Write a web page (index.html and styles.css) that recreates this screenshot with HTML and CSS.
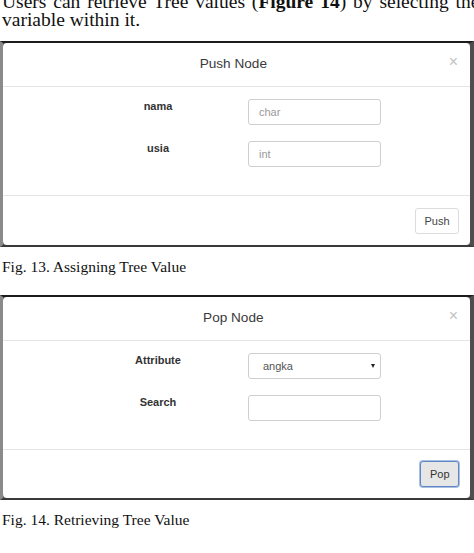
FILE: index.html
```html
<!DOCTYPE html>
<html>
<head>
<meta charset="utf-8">
<link rel="stylesheet" href="styles.css">
</head>
<body>
<p class="lead"><span class="line">Users can retrieve Tree values (<b>Figure 14</b>) by selecting the</span><br><span class="line">variable within it.</span></p>

<div class="shot">
  <div class="modal">
    <div class="modal-header">
      <div class="modal-title">Push Node</div>
      <div class="close">×</div>
    </div>
    <div class="modal-body">
      <div class="label">nama</div>
      <div class="field"><span class="ph">char</span></div>
      <div class="label">usia</div>
      <div class="field"><span class="ph">int</span></div>
    </div>
    <div class="modal-footer">
      <div class="btn">Push</div>
    </div>
  </div>
</div>
<p class="caption">Fig. 13. Assigning Tree Value</p>

<div class="shot shot2">
  <div class="modal">
    <div class="modal-header">
      <div class="modal-title">Pop Node</div>
      <div class="close">×</div>
    </div>
    <div class="modal-body">
      <div class="label">Attribute</div>
      <div class="field select"><span class="val">angka</span><span class="caret"></span></div>
      <div class="label">Search</div>
      <div class="field"></div>
    </div>
    <div class="modal-footer">
      <div class="btn btn-focus">Pop</div>
    </div>
  </div>
</div>
<p class="caption cap2">Fig. 14. Retrieving Tree Value</p>
</body>
</html>
```

FILE: styles.css
```css
html, body {
  margin: 0;
  padding: 0;
  overflow: hidden;
  background: #fff;
}
body {
  width: 474px;
  height: 553px;
  font-family: "Liberation Serif", "Times New Roman", serif;
  color: #111;
}
.lead {
  margin: -7px 0 0 0;
  padding-left: 2px;
  font-size: 19.5px;
  line-height: 18px;
  white-space: nowrap;
}
.lead .line:first-child {
  word-spacing: 2px;
}
.shot {
  margin-top: 12px;
  background: #555;
  border-top: 2px solid #1c1c1c;
  border-bottom: 2px solid #3a3a3a;
  border-left: 3px solid #8a8a8a;
  border-right: 4px solid #4e4e4e;
}
.shot2 {
  margin-top: 19px;
}
.modal {
  background: #fff;
  border-radius: 4px;
  font-family: "Liberation Sans", Arial, sans-serif;
  color: #333;
}
.modal-header {
  display: flex;
  align-items: flex-start;
  padding: 12px 12px 14px 15px;
  border-bottom: 1px solid #e5e5e5;
}
.modal-title {
  flex: 1;
  text-align: center;
  font-size: 13.6px;
  line-height: 17px;
  color: #3a3a3a;
}
.close {
  font-size: 16px;
  line-height: 17px;
  color: #c2c2c2;
  margin-top: -2px;
}
.modal-body {
  display: grid;
  grid-template-columns: 180px 133px;
  row-gap: 16.5px;
  padding: 11.5px 0 27.5px 65px;
  border-bottom: 1px solid #e5e5e5;
}
.label {
  font-size: 11px;
  font-weight: bold;
  line-height: 15px;
  text-align: center;
  color: #333;
}
.field {
  height: 26px;
  box-sizing: border-box;
  border: 1px solid #cfcfcf;
  border-radius: 3px;
  display: flex;
  align-items: center;
  padding: 0 10px;
  font-size: 11px;
}
.ph {
  color: #9a9a9a;
}
.select {
  padding: 0 5px 0 14px;
  justify-content: space-between;
}
.val {
  color: #555;
}
.caret {
  width: 0;
  height: 0;
  border-left: 2.5px solid transparent;
  border-right: 2.5px solid transparent;
  border-top: 4px solid #222;
}
.modal-footer {
  display: flex;
  justify-content: flex-end;
  padding: 12px 11px 11px 11px;
}
.btn {
  height: 26px;
  box-sizing: border-box;
  border: 1px solid #dcdcdc;
  border-radius: 3px;
  padding: 0 8.5px;
  display: flex;
  align-items: center;
  font-size: 11px;
  color: #444;
  background: #fff;
}
.btn-focus {
  background: #e6e6e6;
  border-color: #5f87c6;
  box-shadow: 0 0 0 1px #a9bfe4;
  color: #333;
  margin-top: -1px;
}
.caption {
  margin: 11.5px 0 0 0;
  padding-left: 2px;
  font-size: 15.5px;
  line-height: 18px;
}
.cap2 {
  margin-top: 11.3px;
}
```
